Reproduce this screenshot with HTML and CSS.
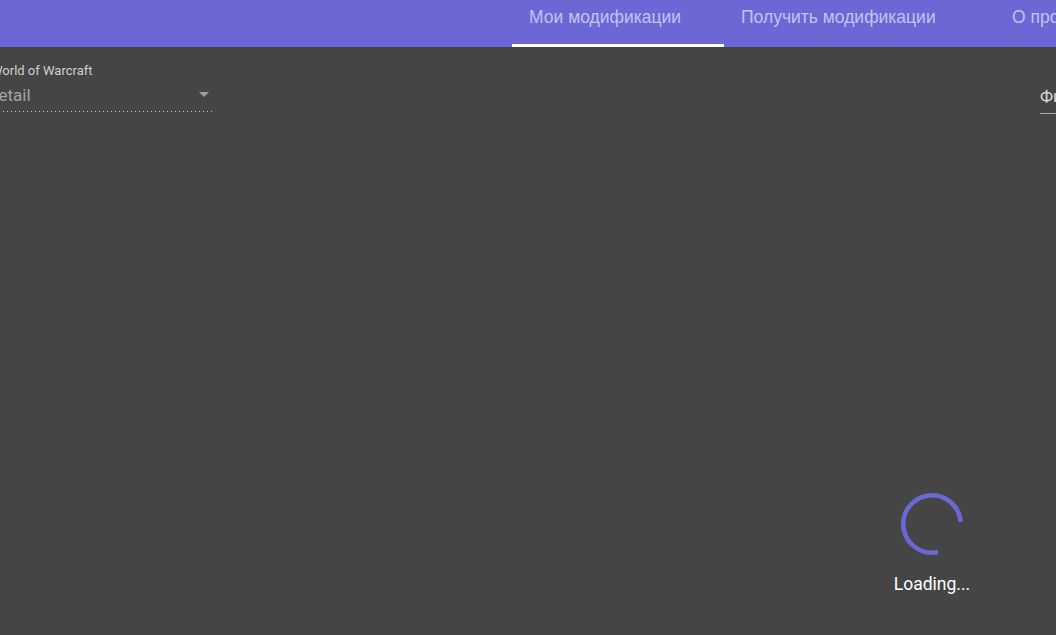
FILE: index.html
```html
<!DOCTYPE html>
<html lang="ru">
<head>
    <meta charset="UTF-8">
    <meta name="viewport" content="width=device-width, initial-scale=1.0">
    <title>Мои модификации</title>
    <link rel="stylesheet" href="styles.css">
</head>
<body>

<header class="topbar">
    <nav class="tabs">
        <a class="tab tab-mine active">Мои модификации</a>
        <a class="tab tab-get">Получить модификации</a>
        <a class="tab tab-about">О программе</a>
    </nav>
</header>

<main class="content">
    <div class="toolbar">
        <!-- game / flavor selector -->
        <div class="select-field">
            <label class="field-label">World of Warcraft</label>
            <div class="select-box">
                <span class="select-value">Retail</span>
                <span class="select-arrow"></span>
            </div>
        </div>

        <div class="filter-field">
            <span class="filter-placeholder">Фильтр</span>
        </div>
    </div>

    <div class="loader">
        <svg class="spinner" width="66" height="66" viewBox="0 0 66 66">
            <circle cx="33" cy="33" r="28.7" fill="none" stroke="#6b68d6" stroke-width="4.6"
                    stroke-dasharray="139 200" transform="rotate(78 33 33)"/>
        </svg>
        <div class="loader-text">Loading...</div>
    </div>
</main>

</body>
</html>
```

FILE: styles.css
```css
body {
    margin: 0;
    height: 100vh;
    overflow: hidden;
    background-color: #454545;
    font-family: Roboto, "Liberation Sans", Arial, sans-serif;
    color: #fff;
}

/* top navigation */
.topbar {
    height: 47px;
    background-color: #6b68d6;
    overflow: hidden;
}
.tabs {
    display: flex;
    margin-left: 512px;
    height: 100%;
}
.tab {
    box-sizing: border-box;
    flex-shrink: 0;
    height: 47px;
    padding-left: 17px;
    line-height: 35px;
    font-family: "Liberation Sans", Arial, sans-serif;
    font-size: 17.5px;
    color: rgba(255, 255, 255, 0.6);
    white-space: nowrap;
    border-bottom: 3px solid transparent;
    cursor: pointer;
}
.tab.active {
    border-bottom-color: #fff;
}
.tab-mine {
    width: 212px;
}
.tab-get {
    width: 271px;
}

/* filters row */
.content {
    position: relative;
    height: calc(100vh - 47px);
}
.toolbar {
    display: flex;
    justify-content: space-between;
    align-items: flex-start;
    padding-top: 17px;
}
.select-field {
    margin-left: -9px;
    width: 221px;
}
.field-label {
    display: block;
    font-size: 13px;
    line-height: 14px;
    color: #cfcfcf;
}
.select-box {
    position: relative;
    height: 34px;
    background-image: repeating-linear-gradient(to right, #c4c4c4 0 1px, transparent 1px 4px);
    background-size: 100% 1px;
    background-repeat: no-repeat;
    background-position: left bottom;
}
.select-value {
    display: block;
    margin-left: -3px;
    padding-top: 6px;
    font-size: 17px;
    line-height: 22px;
    color: #a3a3a3;
}
.select-arrow {
    position: absolute;
    right: 3px;
    top: 14px;
    width: 0;
    height: 0;
    border-left: 5px solid transparent;
    border-right: 5px solid transparent;
    border-top: 5px solid #9e9e9e;
}

.filter-field {
    width: 120px;
    margin-right: -104px;
    margin-top: 18px;
    height: 31px;
    border-bottom: 1px solid #a8a8a8;
    overflow: hidden;
}
.filter-placeholder {
    display: block;
    padding-top: 3px;
    font-size: 17px;
    line-height: 22px;
    color: #d8d8d8;
    white-space: nowrap;
}

/* loading indicator */
.loader {
    position: absolute;
    left: 882px;
    top: 444px;
    width: 100px;
    text-align: center;
}
.spinner {
    display: block;
    margin: 0 auto;
}
.loader-text {
    margin-top: 17px;
    font-size: 17.5px;
    line-height: 20px;
}
```
